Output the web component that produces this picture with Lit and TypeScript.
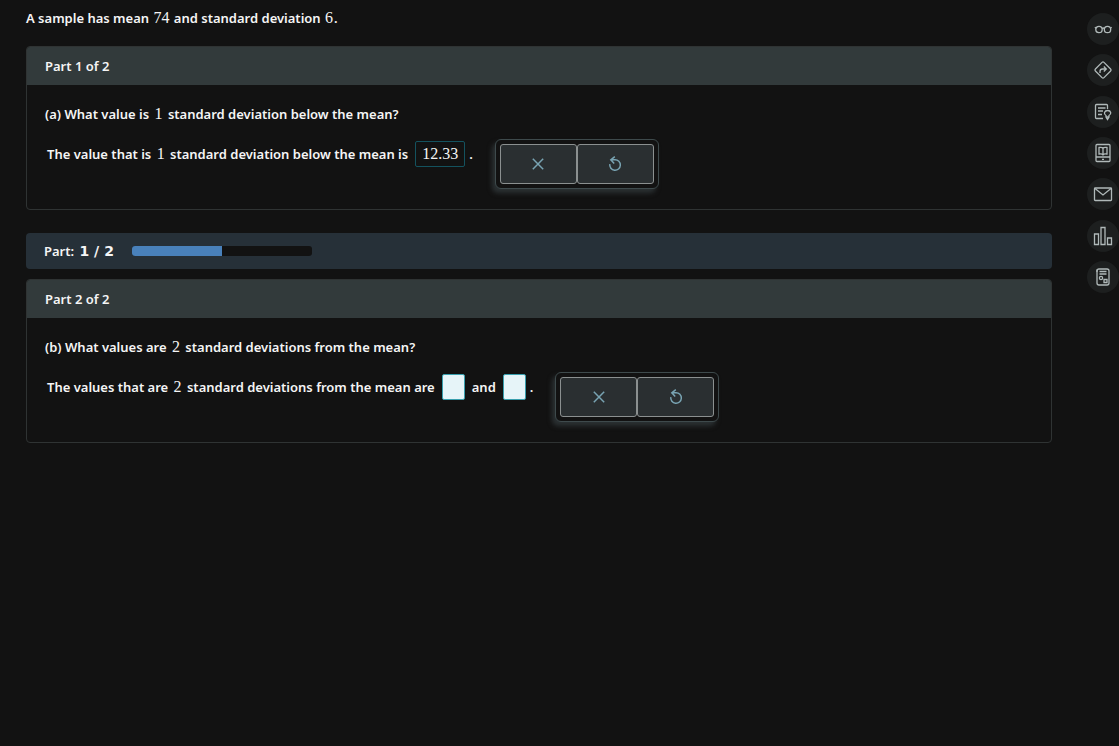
import { LitElement, html, css, svg } from "lit";
import { customElement, property } from "lit/decorators.js";

@customElement("answer-tools")
class AnswerTools extends LitElement {
  static styles = css`
    :host {
      display: flex;
      box-sizing: border-box;
      padding: 4px;
      border: 1px solid #3e4a4c;
      border-radius: 6px;
      background: #121212;
      box-shadow: -3px 4px 5px #2b3133;
    }
    button {
      display: flex;
      align-items: center;
      justify-content: center;
      box-sizing: border-box;
      width: 77px;
      height: 40px;
      padding: 0;
      border: 1px solid #8b9090;
      border-radius: 3px;
      background: #2a2f31;
      color: #78a3b2;
    }
    svg {
      width: 14px;
      height: 16px;
      fill: none;
      stroke: currentColor;
      stroke-width: 1.5;
    }
  `;
  render() {
    return html`
      <button aria-label="Clear">
        <svg viewBox="0 0 14 16"><path d="M1.8 2.8 12.2 13.2M12.2 2.8 1.8 13.2" /></svg>
      </button>
      <button aria-label="Undo">
        <svg viewBox="0 0 14 16"><path d="M1.8 8.200a5.300 5.300 0 1 0 5.200-4.500H3M6.800 .6 2.8 3.800 6.200 7.600" /></svg>
      </button>
    `;
  }
}

@customElement("question-part")
class QuestionPart extends LitElement {
  @property() heading = "";
  static styles = css`
    :host {
      display: block;
      border: 1px solid #2f3333;
      border-radius: 4px;
      overflow: hidden;
    }
    h2 {
      margin: 0;
      padding: 0 18px;
      font-size: 13px;
      line-height: 38px;
      font-weight: 600;
      background: #323a3b;
    }
    .body {
      padding: 19px 18px 20px;
    }
  `;
  render() {
    return html`<h2>${this.heading}</h2><div class="body"><slot></slot></div>`;
  }
}

const railIcons = [
  { label: "Accessibility", art: svg`<circle cx="6" cy="10.500" r="3.200"/><circle cx="14.500" cy="10.500" r="3.200"/><path d="M9 9.500q1.300-1 2.500 0M3 9.500 2 8M17.500 9.500l1-1.500"/>` },
  { label: "Directions", art: svg`<path d="M9 2.400q1-1 2 0L17.600 9q1 1 0 2L11 17.600q-1 1-2 0L2.400 11q-1-1 0-2ZM7 13v-1.500q0-2.500 2.500-2.500H13M10.800 6.500 13.300 9l-2.500 2.500"/>` },
  { label: "Hint", art: svg`<path d="M10 16.500H3.500q-1 0-1-1V3.500q0-1 1-1h10q1 0 1 1V7M5 6h7.500M5 9h5M5 12.500h4M13 15v-1.500q-2-1-1.500-3 .8-2 3.200-2t3 2q.4 2-1.700 3V15l-1.500 2.500ZM13.500 15H16"/>` },
  { label: "Textbook", art: svg`<rect x="3" y="1.500" width="14" height="17" rx="1"/><path d="M3 14h14M6 4.500q3-.7 4 .8 1-1.500 4-.8v6.500q-3-.7-4 .8-1-1.500-4-.8ZM10 5.300v6.500M9 16.300h2"/>` },
  { label: "Message", art: svg`<rect x="1.500" y="4" width="17" height="12.500" rx=".8"/><path d="m2 4.500 8 6.500 8-6.500"/>` },
  { label: "Data tools", art: svg`<path d="M1.500 8h4v10.500h-4ZM8 1.500h4v17H8ZM14.500 12h4v6.500h-4Z"/>` },
  { label: "Formula sheet", art: svg`<path d="M6 2h8q2 0 2 2v12q0 2-2 2H6q-2 0-2-2V4q0-2 2-2M6.500 4.500h7M6.500 7h7"/><circle cx="8" cy="11" r="1.600"/><path d="M11 12.500h3v3h-3ZM4 2.500V5"/>` },
];

@customElement("app-root")
class AppRoot extends LitElement {
  static styles = css`
    :host {
      display: flex;
      min-height: 100vh;
      box-sizing: border-box;
      background: #121212;
      color: #f5f5f5;
      font: 600 13px/20px "Noto Sans", sans-serif;
      overflow: hidden;
    }
    main {
      flex: 1;
      min-width: 0;
      padding: 8px 35px 24px 26px;
    }
    p {
      margin: 0;
    }
    .intro {
      margin-bottom: 18px;
    }
    .num,
    input {
      font-family: "Liberation Serif", serif;
      font-size: 16px;
      font-weight: 400;
      line-height: 16px;
    }
    .num {
      margin: 0 2px;
    }
    .intro .num {
      margin: 0 1px;
    }
    .answer {
      display: flex;
      align-items: flex-start;
      margin-top: 15px;
      padding-left: 2px;
    }
    .sentence {
      display: flex;
      align-items: center;
      gap: 7px;
      height: 30px;
      white-space: nowrap;
    }
    input {
      box-sizing: border-box;
      margin: 0;
      padding: 0;
      border: 1px solid #14525e;
      border-radius: 2px;
      background: #121212;
      color: #f5f5f5;
      text-align: center;
      width: 50px;
      height: 26px;
    }
    input.blank {
      width: 23px;
      background: #e6f4f8;
      border-color: #389fae;
      color: #121212;
    }
    .stop {
      margin-left: -3px;
    }
    answer-tools {
      margin-left: 22px;
    }
    .progress {
      display: flex;
      align-items: center;
      gap: 18px;
      height: 36px;
      margin: 23px 0 10px;
      padding: 0 18px;
      border-radius: 4px;
      background: #263038;
    }
    b {
      margin-left: 2px;
      font: bold 14px/20px "Verdana", "DejaVu Sans", sans-serif;
    }
    .track {
      width: 180px;
      height: 10px;
      border-radius: 3px;
      background: #121212;
      overflow: hidden;
    }
    .fill {
      height: 100%;
      background: #4981bb;
    }
    nav {
      display: flex;
      flex-direction: column;
      justify-content: space-between;
      height: 280px;
      padding-top: 13px;
    }
    .tool {
      display: grid;
      place-items: center;
      width: 32px;
      height: 32px;
      padding: 0;
      border: 0;
      border-radius: 50%;
      background: #1d1f1f;
      color: #b0b9b9;
    }
    .tool svg {
      width: 20px;
      height: 20px;
      fill: none;
      stroke: currentColor;
      stroke-width: 1.3;
    }
  `;
  render() {
    const done = 1;
    const total = 2;
    return html`
      <main>
        <p class="intro">A sample has mean <span class="num">74</span> and standard deviation <span class="num">6</span>.</p>
        <question-part heading="Part 1 of 2">
          <p>(a) What value is <span class="num">1</span> standard deviation below the mean?</p>
          <div class="answer">
            <div class="sentence">
              <label for="below">The value that is <span class="num">1</span> standard deviation below the mean is</label>
              <input id="below" value="12.33" />
              <span class="stop">.</span>
            </div>
            <answer-tools></answer-tools>
          </div>
        </question-part>
        <div class="progress">
          <span>Part: <b>${done} / ${total}</b></span>
          <div class="track" role="progressbar" aria-label="Parts completed" aria-valuenow=${done} aria-valuemax=${total}>
            <div class="fill" style="width:${(done / total) * 100}%"></div>
          </div>
        </div>
        <question-part heading="Part 2 of 2">
          <p>(b) What values are <span class="num">2</span> standard deviations from the mean?</p>
          <div class="answer">
            <div class="sentence">
              <label for="low">The values that are <span class="num">2</span> standard deviations from the mean are</label>
              <input id="low" class="blank" />
              <label for="high">and</label>
              <input id="high" class="blank" />
              <span class="stop">.</span>
            </div>
            <answer-tools></answer-tools>
          </div>
        </question-part>
      </main>
      <nav aria-label="Tools">
        ${railIcons.map((i) => html`<button class="tool" aria-label=${i.label}><svg viewBox="0 0 20 20">${i.art}</svg></button>`)}
      </nav>
    `;
  }
}
